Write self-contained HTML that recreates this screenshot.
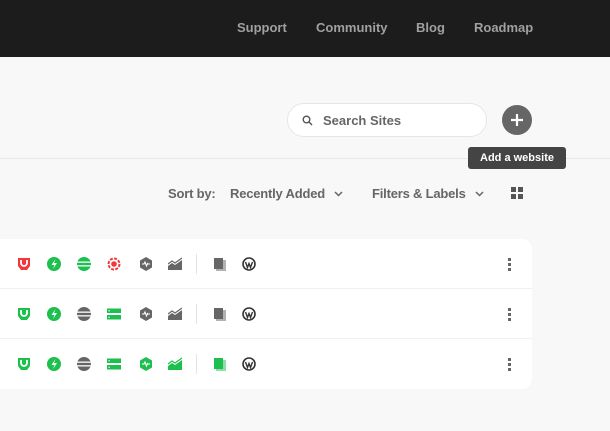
<!DOCTYPE html>
<html><head><meta charset="utf-8"><style>
*{margin:0;padding:0;box-sizing:border-box}
body{width:610px;height:431px;background:#f8f8f8;font-family:"Liberation Sans",sans-serif;position:relative;overflow:hidden}
.hdr{position:absolute;left:0;top:0;width:610px;height:57px;background:#1c1c1c}
.hdr span{position:absolute;top:20px;font-size:13px;font-weight:bold;color:#a0a0a0}
.search{position:absolute;left:287px;top:103px;width:200px;height:34px;background:#fff;border:1px solid #e6e6e6;border-radius:17px}
.search span{position:absolute;left:35px;top:9px;font-size:13px;font-weight:bold;color:#666}
.plus{position:absolute;left:502px;top:105px;width:30px;height:30px;border-radius:50%;background:#666}
.tip{position:absolute;left:468px;top:147px;width:98px;height:22px;background:#444;border-radius:3px;color:#fff;font-size:11px;font-weight:bold;text-align:center;line-height:22px;z-index:5}
.line{position:absolute;left:0;top:158px;width:610px;height:1px;background:#e8e8e8}
.sort{position:absolute;top:186px;font-size:13px;font-weight:bold;color:#666;letter-spacing:-0.2px}
.card{position:absolute;left:0;top:239px;width:532px;height:150px;background:#fff;border-radius:0 10px 10px 0}
.row{position:absolute;left:0;width:532px;height:50px;border-bottom:1px solid #f0f0f0}
.row svg{position:absolute}
.vd{position:absolute;left:196px;top:15px;width:1px;height:20px;background:#e4e4e4}
.keb{position:absolute;left:508px;top:19px;width:3px}
.keb i{display:block;width:3px;height:3px;background:#666;margin-bottom:2px}
</style></head><body>
<svg width="0" height="0" style="position:absolute">
<defs>
<symbol id="sh" viewBox="0 0 14 14"><path d="M1 1h12v8l-3 4H4L1 9z" fill="currentColor"/><path d="M4 3v3a3 3 0 0 0 6 0V3" fill="none" stroke="#fff" stroke-width="1.8"/></symbol>
<symbol id="bo" viewBox="0 0 14 14"><circle cx="7" cy="7" r="7" fill="currentColor"/><path d="M8.5 2L4.5 8h3l-1.5 4 4-6h-3z" fill="#fff"/></symbol>
<symbol id="st" viewBox="0 0 14 14"><circle cx="7" cy="7" r="7" fill="currentColor"/><rect x="0" y="4.5" width="14" height="1.3" fill="#fff"/><rect x="0" y="8.2" width="14" height="1.3" fill="#fff"/></symbol>
<symbol id="vi" viewBox="0 0 14 14"><circle cx="7" cy="7" r="5.5" fill="none" stroke="currentColor" stroke-width="2" stroke-dasharray="3 1.3"/><circle cx="7" cy="7" r="2.8" fill="currentColor"/></symbol>
<symbol id="sv" viewBox="0 0 14 14"><rect x="0" y="1.5" width="14" height="4.5" fill="currentColor"/><rect x="0" y="8" width="14" height="4.5" fill="currentColor"/><rect x="1.5" y="3.2" width="1.2" height="1.2" fill="#fff"/><rect x="1.5" y="9.7" width="1.2" height="1.2" fill="#fff"/></symbol>
<symbol id="hx" viewBox="0 0 14 14"><path d="M7 0l6 3.5v7L7 14l-6-3.5v-7z" fill="currentColor"/><path d="M3 7h2l1-2 1.5 4 1-2.5.5.5h2" fill="none" stroke="#fff" stroke-width="1.1"/></symbol>
<symbol id="ch" viewBox="0 0 14 14"><path d="M0 13V9l4-3 3 2 7-5v10z" fill="currentColor"/><path d="M0 7l4-3 3 2 7-5" fill="none" stroke="currentColor" stroke-width="1.2"/></symbol>
<symbol id="pg" viewBox="0 0 14 14"><rect x="3" y="3" width="10" height="11" fill="currentColor" opacity=".5"/><rect x="1" y="1" width="9" height="11" fill="currentColor"/></symbol>
<symbol id="wp" viewBox="0 0 14 14"><circle cx="7" cy="7" r="6" fill="none" stroke="#333" stroke-width="1.6"/><path d="M3.5 5l2 5.5L7 6.5l1.5 4L10.5 5" fill="none" stroke="#333" stroke-width="1.4"/></symbol>
</defs></svg>
<div class="hdr"><span style="left:237px">Support</span><span style="left:316px">Community</span><span style="left:416px">Blog</span><span style="left:474px">Roadmap</span></div>
<div class="search"><svg style="position:absolute;left:14px;top:11px" width="11" height="11" viewBox="0 0 11 11"><circle cx="4.5" cy="4.5" r="3.3" fill="none" stroke="#555" stroke-width="1.4"/><path d="M7 7l3 3" stroke="#555" stroke-width="1.4"/></svg><span>Search Sites</span></div>
<div class="plus"><svg width="30" height="30"><path d="M15 9v12M9 15h12" stroke="#fff" stroke-width="2.2"/></svg></div>
<div class="line"></div>
<div class="tip">Add a website</div>
<div class="sort" style="left:168px">Sort by:</div>
<div class="sort" style="left:230px">Recently Added</div>
<svg style="position:absolute;left:334px;top:191px" width="9" height="6"><path d="M1 1l3.5 3.5L8 1" fill="none" stroke="#666" stroke-width="1.5"/></svg>
<div class="sort" style="left:372px">Filters &amp; Labels</div>
<svg style="position:absolute;left:475px;top:191px" width="9" height="6"><path d="M1 1l3.5 3.5L8 1" fill="none" stroke="#666" stroke-width="1.5"/></svg>
<svg style="position:absolute;left:511px;top:187px" width="12" height="12"><rect x="0" y="0" width="5" height="5" fill="#555"/><rect x="7" y="0" width="5" height="5" fill="#555"/><rect x="0" y="7" width="5" height="5" fill="#555"/><rect x="7" y="7" width="5" height="5" fill="#555"/></svg>
<div class="card">
<div class="row" style="top:0">
<svg style="left:17px;top:18px;color:#f0383c" width="14" height="14"><use href="#sh"/></svg>
<svg style="left:47px;top:18px;color:#1dbf4f" width="14" height="14"><use href="#bo"/></svg>
<svg style="left:77px;top:18px;color:#1dbf4f" width="14" height="14"><use href="#st"/></svg>
<svg style="left:107px;top:18px;color:#f0383c" width="14" height="14"><use href="#vi"/></svg>
<svg style="left:139px;top:18px;color:#666" width="14" height="14"><use href="#hx"/></svg>
<svg style="left:168px;top:18px;color:#666" width="14" height="14"><use href="#ch"/></svg>
<div class="vd"></div>
<svg style="left:213px;top:18px;color:#666" width="14" height="14"><use href="#pg"/></svg>
<svg style="left:242px;top:18px" width="14" height="14"><use href="#wp"/></svg>
<div class="keb"><i></i><i></i><i></i></div>
</div>
<div class="row" style="top:50px">
<svg style="left:17px;top:18px;color:#1dbf4f" width="14" height="14"><use href="#sh"/></svg>
<svg style="left:47px;top:18px;color:#1dbf4f" width="14" height="14"><use href="#bo"/></svg>
<svg style="left:77px;top:18px;color:#666" width="14" height="14"><use href="#st"/></svg>
<svg style="left:107px;top:18px;color:#1dbf4f" width="14" height="14"><use href="#sv"/></svg>
<svg style="left:139px;top:18px;color:#666" width="14" height="14"><use href="#hx"/></svg>
<svg style="left:168px;top:18px;color:#666" width="14" height="14"><use href="#ch"/></svg>
<div class="vd"></div>
<svg style="left:213px;top:18px;color:#666" width="14" height="14"><use href="#pg"/></svg>
<svg style="left:242px;top:18px" width="14" height="14"><use href="#wp"/></svg>
<div class="keb"><i></i><i></i><i></i></div>
</div>
<div class="row" style="top:100px;border-bottom:none">
<svg style="left:17px;top:18px;color:#1dbf4f" width="14" height="14"><use href="#sh"/></svg>
<svg style="left:47px;top:18px;color:#1dbf4f" width="14" height="14"><use href="#bo"/></svg>
<svg style="left:77px;top:18px;color:#666" width="14" height="14"><use href="#st"/></svg>
<svg style="left:107px;top:18px;color:#1dbf4f" width="14" height="14"><use href="#sv"/></svg>
<svg style="left:139px;top:18px;color:#1dbf4f" width="14" height="14"><use href="#hx"/></svg>
<svg style="left:168px;top:18px;color:#1dbf4f" width="14" height="14"><use href="#ch"/></svg>
<div class="vd"></div>
<svg style="left:213px;top:18px;color:#1dbf4f" width="14" height="14"><use href="#pg"/></svg>
<svg style="left:242px;top:18px" width="14" height="14"><use href="#wp"/></svg>
<div class="keb"><i></i><i></i><i></i></div>
</div>
</div>
</body></html>
